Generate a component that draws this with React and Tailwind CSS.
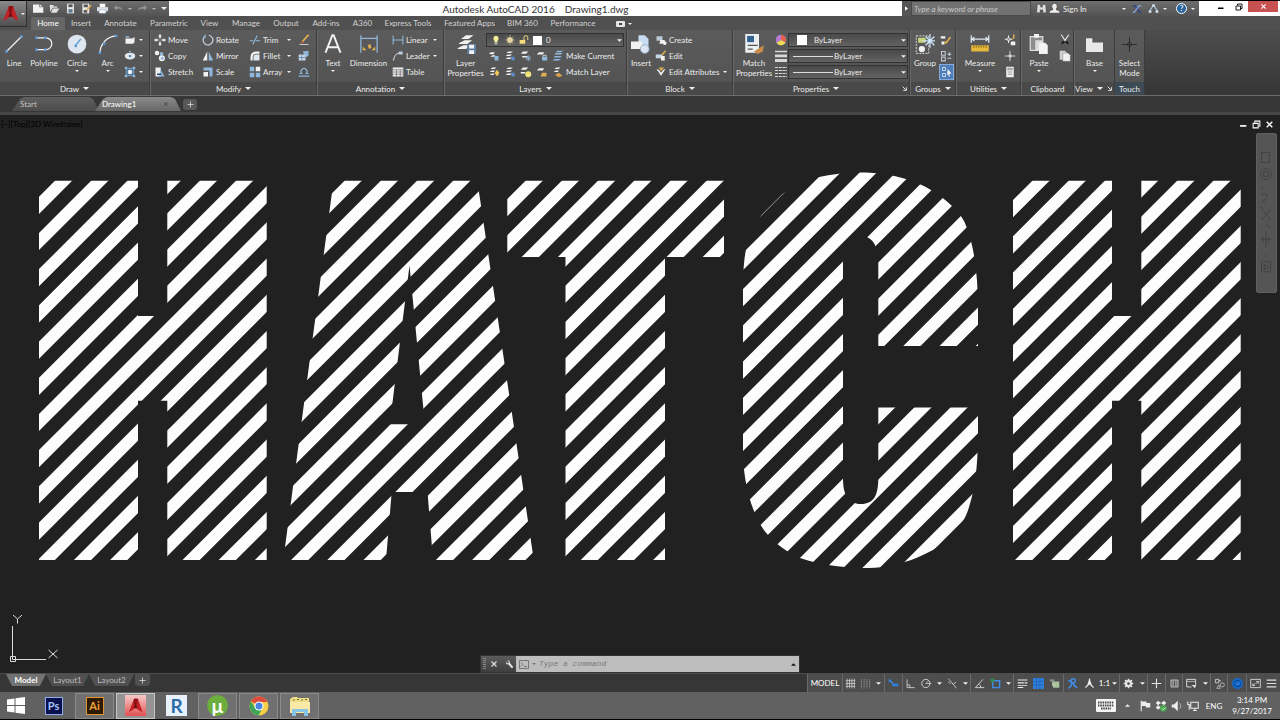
import clsx from "clsx";

const W = "#f2f2f2";
const BLUE = "#8fb8dc";
const GOLD = "#e0b050";

const icons = {
  line: <><path d="M2 14 14 2" stroke={W} /><path d="M1 13h2v2H1zM13 1h2v2h-2z" fill="#5d9bd8" /></>,
  polyline: <><path d="M2 3h7.500a4 4 0 0 1 0 9.500H2" stroke={W} /><path d="M1 2h2v2H1zM1 11.500h2v2H1zM8 2h2v2H8zM8 11.500h2v2H8z" fill="#5d9bd8" /></>,
  circle: <><circle cx="8" cy="8" r="7.500" fill="#dde5ee" /><path d="M7 9l4-5" stroke="#5d9bd8" /><path d="M6 8.500h2v2H6z" fill="#5d9bd8" /></>,
  arc: <><path d="M1.500 15C2 8 7 2 14.500 1.500" stroke={W} /><path d="M.5 14h2v2h-2zM4 6.500h2v2H4zM13.500.5h2v2h-2z" fill="#5d9bd8" /></>,
  rect: <><path d="M2 6h9l3-2v7l-2 2H2z" fill={W} /><path d="M2 3h5v2H2z" fill={BLUE} /></>,
  ellipse: <><ellipse cx="8" cy="8" rx="7" ry="4.500" fill="#dfe7ef" /><circle cx="8" cy="8" r="1.500" fill="#3f6f9f" /><path d="M7 1h2v2H7z" fill={BLUE} /></>,
  hatch: <><path d="M3 3h10v10H3z" stroke={BLUE} fill="#49729b" /><path d="M1 1h3v3H1zM12 1h3v3h-3zM1 12h3v3H1zM12 12h3v3h-3z" fill={BLUE} /><circle cx="8" cy="8" r="3" fill={W} /></>,
  move: <path d="M8 0l2.500 3H9v3H7V3H5.500zM8 16l2.500-3H9v-3H7v3H5.500zM0 8l3-2.500V7h3v2H3v1.500zM16 8l-3-2.500V7h-3v2h3v1.500z" fill={W} />,
  copy: <><circle cx="4" cy="4" r="3" fill={W} /><circle cx="10" cy="5" r="2.500" fill={BLUE} /><circle cx="10.500" cy="11" r="4" fill={W} /><circle cx="11" cy="11" r="2" fill={BLUE} /></>,
  stretch: <><path d="M2 2h7v12H2z" fill={W} /><path d="M9 5l5 9H6z" fill={BLUE} /><path d="M4 10h6v2H4z" fill="#30506e" /></>,
  rotate: <><path d="M4 3a6.500 6.500 0 1 0 5-1.300" stroke="#c9d6e4" strokeWidth="1.600" /><path d="M5 0v5H1z" fill={BLUE} /></>,
  mirror: <><path d="M7 2v12H1z" fill={W} /><path d="M9 2v12h6z" fill={BLUE} /></>,
  scale: <><path d="M2 2h12v12h-4V6H2z" fill={BLUE} /><path d="M2 8h6v6H2z" fill={W} /></>,
  trim: <path d="M1 9h5M9 9h6M11 2 5 14" stroke={BLUE} strokeWidth="1.400" />,
  fillet: <><path d="M2 14V9a7 7 0 0 1 7-7h5v3H9.500A4.500 4.500 0 0 0 5 9.500V14z" fill={W} /><path d="M6 14v-4a4 4 0 0 1 4-4h4v8z" fill="#dfe7ef" /></>,
  array: <><path d="M1 1h6v6H1zM9 9h6v6H9zM1 9h6v6H1z" fill={BLUE} /><path d="M9 1h6v6H9z" fill={W} /></>,
  erase: <><path d="M14 1 6 10" stroke={GOLD} strokeWidth="2.500" /><path d="M6 9l-3 4 5-2z" fill="#d96a3a" /><path d="M2 14h12" stroke={W} /></>,
  explode: <><path d="M6 2l8-1v6l-3 3z" fill={BLUE} /><path d="M1 6h9v8H1z" fill="#c8d9ea" /><path d="M5 6v8M1 10h9" stroke="#5a83aa" /></>,
  offset: <path d="M1 13.500h14M2 10h3a4 4 0 1 1 6 0h3" stroke={BLUE} strokeWidth="1.500" />,
  text: <path d="M2 15 7.500 1h1L14 15M4 10.500h8" stroke={W} strokeWidth="1.600" />,
  dimension: <><path d="M1.500 1v14M14.500 1v14M2 3.500h12" stroke={BLUE} /><path d="M3 10l3 3H3zM7 9l2-1 1 3-2 1zM13 10l-3 3h3z" fill={GOLD} /></>,
  linear: <path d="M1.500 2v12M14.500 2v12M2 8h12" stroke={BLUE} strokeWidth="1.400" />,
  leader: <><path d="M2 14C3 8 5 5 9 4.500h5" stroke={W} strokeWidth="1.300" /><path d="M9 2h5v4H9z" fill="#bcd0e4" /></>,
  table: <><path d="M1 2h14v12H1z" fill={W} /><path d="M1 5h14M1 8h14M1 11h14M6 5v9M11 5v9" stroke="#6c6c6c" /></>,
  layers: <><path d="M4 4l4-3h6l-4 3zM3 7l4-2h6l-4 3H2zM2 11l4-2h5l-3 3H1z" fill={W} /><path d="M9 8h7v8H9z" fill="#5c7ca0" /><path d="M10.500 8.500h4v3h-4zM10.500 13h4v3h-4z" fill={W} /></>,
  layerA: <><path d="M1 5l3-2h5l-2 3zM3 9l3-2h4L8 9z" fill={W} /><path d="M8 8h6v6H9z" fill={BLUE} /></>,
  layerB: <><path d="M3 4l3-2h6L9 4zM2 8l3-2h6L8 8zM2 12l3-2h6l-3 2z" fill={W} /><path d="M10 9h4v5h-4z" fill="#5d8fd0" /></>,
  layerSnow: <><path d="M1 5l3-3h7L8 5zM3 8h7v2H3z" fill={W} /><path d="M11 7v8M7.500 9l7 4M14.500 9l-7 4" stroke={BLUE} strokeWidth="1.300" /></>,
  layerLock: <><path d="M1 6l3-3h7L9 6z" fill={W} /><path d="M8 9h7v5H8z" fill={BLUE} /><path d="M9.500 9V7h4v2" stroke={W} /></>,
  layerCheck: <path d="M5 3l2-2h8l-3 2zM3 6l2-2h9l-2 2zM2 10l2-2h9l-2 2zM1 14l2-2h9l-3 2z" fill={BLUE} />,
  layerBulb: <><path d="M3 4l3-2h5L9 4zM2 8l3-2h4L8 8zM2 12l3-2h4l-2 2z" fill={W} /><path d="M12 5l3 4-2 4h-2L9 9z" fill="#f0c75a" /></>,
  layerSun: <><path d="M1 5l3-3h7L8 5zM1 8h6v2H1z" fill={W} /><circle cx="11" cy="11" r="4" fill="#f2e27a" /></>,
  layerUnlock: <><path d="M1 6l3-3h7L9 6z" fill={W} /><path d="M8 9h6v5H6z" fill={GOLD} /></>,
  layerMatch: <><path d="M3 4l3-2h5L9 4zM2 8l3-2h4L8 8z" fill={W} /><path d="M4 12l5-3 5 4-5 2z" fill="#d9a04a" /></>,
  bulb: <><path d="M8 1a4.500 4.500 0 0 1 2.500 8v3h-5V9A4.500 4.500 0 0 1 8 1z" fill="#f5ee9b" /><path d="M6 13h4v2H6z" fill="#cfd6dd" /></>,
  sun: <><circle cx="8" cy="8" r="4.500" fill="#f6e7b0" /><path d="M8 0v16M0 8h16M2.500 2.500l11 11M13.500 2.500l-11 11" stroke="#dcc993" /></>,
  unlock: <><path d="M1 8h9v6H1z" fill="#f5dc7d" /><path d="M8 8V4a3 3 0 0 1 6 0v4" stroke="#f5dc7d" strokeWidth="1.500" /></>,
  insert: <><path d="M6 1h5l3 3v6H6z" fill="#c8dcf2" /><path d="M0 6h9v6H0z" fill={W} /><circle cx="11" cy="12" r="3.500" fill="#dbe6f2" stroke="#8aa5c4" strokeWidth=".6" /></>,
  create: <><path d="M2 3h8v4L8 9H2z" fill="#b9c9d8" /><path d="M7 8h6v5H6z" fill={W} /><circle cx="13" cy="12" r="2.500" fill={W} /></>,
  edit: <><path d="M1 6h9v5H1z" fill="#c6d6e4" /><path d="M8 8h5v6H8z" fill={W} /><path d="M14 1 9 7" stroke={GOLD} strokeWidth="2" /></>,
  editAttr: <><path d="M2 4l6 9 6-9-3 1-3 4-3-4z" fill={W} /><path d="M5 2h7l-4 5z" fill={GOLD} /></>,
  match: <><path d="M1 0h11v15H1z" fill="#eceff2" /><path d="M2.500 1.500H8v5H2.500z" fill="#356391" /><path d="M3 9h8M3 12h4" stroke="#555" /><path d="M16 9l-5 3-3 2 3 2 4-2z" fill="#c98b4c" /></>,
  wheel: <><circle cx="8" cy="8" r="7" fill="#4f9ee0" /><path d="M8 8V1a7 7 0 0 1 6 10z" fill="#e85f4c" /><path d="M8 8l6 3.500a7 7 0 0 1-12 0z" fill="#f4d94f" /><path d="M8 8 2 11.500A7 7 0 0 1 8 1z" fill="#b878d0" /></>,
  lweight: <path d="M0 1h16v2H0zM0 6h16v3.500H0zM0 12h16v4H0z" fill="#d8d8d8" />,
  ltype: <path d="M0 2h16M0 6h16M0 10h16M0 14h16" stroke="#dedede" strokeWidth="1.300" strokeDasharray="4 1" />,
  group: <><path d="M1 1.500h10v14H1z" stroke={W} strokeWidth=".7" strokeDasharray="1.500 1" /><path d="M2.500 3h6v4h-6z" fill="#c8d57f" /><circle cx="5.500" cy="12" r="2.500" fill={W} /><path d="M12 0v11M6.500 5.500h10M8.500 2l7 7M15.500 2l-7 7" stroke="#cfe6ff" /></>,
  groupEdit: <><path d="M1 3h6v3H1zM2 10h4v4H2z" fill={W} /><path d="M14 4 8 12l-2-2" stroke={GOLD} strokeWidth="2" /></>,
  ungroup: <path d="M2 2h5v5H2zM2 9.500h5v5H2zM10 5.500h5M12.500 3v5M10 11h5" stroke="#bfc8d4" strokeWidth="1.400" />,
  groupSel: <><path d="M2 2h4v4H2zM2 10h4v4H2z" stroke={W} /><path d="M9 4l5 6-3 .5 1 3-1.500.5-1-3L8 12z" fill={W} /></>,
  measure: <><path d="M1 1v6M15 1v6M1 4h14M3.500 2.500 1.500 4l2 1.500M12.500 2.500l2 1.500-2 1.500" stroke="#dfe7ef" /><path d="M1 9h14v5H1z" fill="#e3b83c" /><path d="M3 9v2M5 9v2M7 9v2M9 9v2M11 9v2M13 9v2" stroke="#6b5418" strokeWidth=".6" /></>,
  quick: <><path d="M6 2v10M1 7h10" stroke={W} strokeWidth="1.300" /><circle cx="6" cy="7" r="2" fill="#8a8a8a" stroke={W} /><path d="M12 1h3l-2 3h2l-4 4 1-4z" fill={GOLD} /><path d="M9 10h6v5H9z" fill={W} /></>,
  point: <><path d="M8 1v14M1 8h14" stroke="#d5d5d5" strokeWidth="1.300" /><circle cx="8" cy="8" r="2.200" fill="#d5d5d5" /></>,
  calc: <><path d="M3 1h10v14H3z" fill={W} /><path d="M5 3h6v2H5zM5 8h6M5 11h6" stroke="#777" /></>,
  paste: <><path d="M1 2h10v11H1z" fill="#8d8d8d" stroke="#ddd" /><path d="M4 0h4v3H4z" fill={W} /><path d="M5 5h6v8H5z" fill="#dcdcdc" /><path d="M8 7h5l2 2v7H8z" fill={W} /></>,
  cut: <><path d="M3 1l6 9M13 1 7 10" stroke={W} strokeWidth="1.500" /><path d="M8 9l-4 1-1 4 4-2zM8 9l4 1 1 4-4-2z" fill="#1c1c1c" /></>,
  copyClip: <><path d="M1 1h7l2 2v10H1z" fill="#d2d2d2" /><path d="M5 4h7l3 3v8H5z" fill={W} stroke="#6d6d6d" strokeWidth=".6" /></>,
  base: <path d="M0 2h6v4h10v9H0z" fill="#e8e8e8" />,
  select: <><path d="M8 0v16M0 8h16" stroke="#2c2c2c" /><path d="M8 5l3 3-3 3-3-3z" stroke="#2c2c2c" /></>,
  newFile: <path d="M0 2h9v4h6v8H0zM10 2l4 3h-4z" fill={W} />,
  open: <path d="M1 3h5l1 2h5v2H5l-3 6zM5.500 8H15l-4 6H3z" fill="#e2e2e2" />,
  save: <><path d="M3 1h10v14H3z" fill="#e9e9e9" /><path d="M5 2h6v4H5z" fill="#555" /><path d="M5 9h6v5H5z" fill="#5b7590" /></>,
  saveAs: <><path d="M2 1h10v14H2z" fill="#e9e9e9" /><path d="M4 2h6v4H4zM4 10h5v4H4z" fill="#555" /><path d="M15 3 8 11" stroke={GOLD} strokeWidth="2" /></>,
  print: <><path d="M4 1h8v5H4z" fill="#fff" /><path d="M0 6h16v6H0z" fill="#dde4ec" /><path d="M3 10h10v5H3z" fill="#fff" stroke="#7d8ba0" strokeWidth=".7" /></>,
  undo: <path d="M6 3 1 7l5 4V8.500c4 0 7 0 8 3.500 0-5-3-6.500-8-6.500z" fill="#929292" />,
  redo: <path d="M10 3l5 4-5 4V8.500c-4 0-7 0-8 3.500 0-5 3-6.500 8-6.500z" fill="#929292" />,
  binoc: <path d="M2 2h4l1 4h2l1-4h4l1 12h-5v-4H6v4H1z" fill="#dcdcdc" stroke="#444" strokeWidth=".6" />,
  person: <path d="M8 1a4 4 0 0 1 2 7v2l5 2v2H1v-2l5-2V8a4 4 0 0 1 2-7z" fill="#efefef" />,
  exchange: <><path d="M1 3h4l7 10h3" stroke="#26408a" strokeWidth="2.200" /><path d="M15 3h-4L4 13H1" stroke="#88a6dd" strokeWidth="2" /></>,
  a360: <><path d="M2 12 8 3l6 9" stroke="#c6dcef" strokeWidth="1.500" /><path d="M1 11h4v3H1zM6 2h4v3H6zM11 11h4v3h-4z" fill="#d7e8f6" /></>,
  minimize: <path d="M2 9h11v3H2z" fill="currentColor" />,
  restore: <><path d="M2 6h9v8H2z" stroke="currentColor" strokeWidth="1.800" /><path d="M5 5V2h9v9h-2" stroke="currentColor" strokeWidth="1.800" /></>,
  close: <path d="M3 3l10 10M13 3 3 13" stroke="currentColor" strokeWidth="2.400" />,
  grid: <path d="M1 4h14M1 8h14M1 12h14M3 1v14M6.500 1v14M10 1v14M13.500 1v14" stroke="#e4e4e4" />,
  snap: <path d="M2 2v13M6 2v13M10 2v13M14 2v13" stroke="#c4c4c4" strokeDasharray="1.500 1" />,
  infer: <><path d="M2 2l5 6" stroke="#3f8ee8" strokeWidth="2" /><path d="M1 3h3v3H1zM6 8h9v4H6z" fill="#2e7fdc" /></>,
  ortho: <path d="M3 2v12h11M3 10h4v4" stroke="#cfcfcf" strokeWidth="1.300" />,
  polar: <><circle cx="7" cy="8" r="6" stroke="#dcdcdc" strokeWidth="1.300" /><path d="M15 8H7l4-4" stroke="#dcdcdc" /></>,
  iso: <path d="M2 1l12 14M2 6l3 2M9 9l4-3" stroke="#cfcfcf" strokeWidth="1.300" />,
  angle: <path d="M13 2 2 14h13M7 9a7 7 0 0 1 3 5" stroke="#dcdcdc" strokeWidth="1.300" />,
  osnap: <><path d="M4 4h10v10H4z" stroke="#3f8ee8" strokeWidth="2" /><path d="M1 1h5v5H1z" fill="#2f8f4a" /></>,
  weight: <path d="M1 2h14v1.500H1zM1 6h9v2H1zM11 6h4v2h-4zM1 10h14v1.200H1zM1 13h8v1.500H1z" fill="#ececec" />,
  transp: <><path d="M0 0h16v16H0z" fill="#2e7fdc" /><path d="M0 5h16M0 10h16M5 0v16M10 0v16" stroke="#1f5fae" /></>,
  cycle: <><path d="M1 2h7v3H1z" fill="#8f8f8f" /><path d="M4 5h11v9H6z" fill="#a6c29a" /><path d="M4 10h5" stroke="#efefef" /></>,
  annoVis: <><circle cx="9" cy="4" r="3" stroke="#3f8ee8" strokeWidth="2" /><path d="M2 15c4-2 5-5 5-8M9 7c1 4 3 6 6 7M2 3l4 3" stroke="#3f8ee8" strokeWidth="2.200" /></>,
  annoAuto: <path d="M8 1v7M8 8l-6 6M8 8l6 6M6 9l2-6 2 6z" stroke="#ececec" strokeWidth="1.800" />,
  gear: <><path d="M8 1v14M1 8h14M3 3l10 10M13 3 3 13" stroke="#e6e6e6" strokeWidth="2.400" /><circle cx="8" cy="8" r="5" fill="#e6e6e6" /><circle cx="8" cy="8" r="2" fill="#4c4c4c" /></>,
  plus: <path d="M8 1v14M1 8h14" stroke="#e8e8e8" strokeWidth="1.600" />,
  units: <path d="M3 3h10v10H3zM6 4v8M10 4v8" stroke="#d8d8d8" strokeWidth="1.300" />,
  quickProps: <><path d="M1 2h13v8M8 13H1V2" stroke="#dcdcdc" strokeWidth="1.400" /><path d="M1 5h13" stroke="#dcdcdc" /><path d="M8 10l5 5 2-5z" fill="#dcdcdc" /></>,
  isolate: <><path d="M2 2h5v5H2zM7 4h3" stroke="#d0d0d0" strokeWidth="1.300" /><circle cx="12" cy="10" r="3" stroke="#d0d0d0" /><path d="M4 15l3-5 2 5z" stroke="#d0d0d0" /></>,
  hardware: <><circle cx="8" cy="8" r="8" fill="#1668c8" /><circle cx="8" cy="8" r="4.500" stroke="#0b4a98" strokeWidth="1.500" /><path d="M6 8l2 2 4-5" stroke="#4b9bf0" /></>,
  clean: <path d="M1 2h14v12H1zM9 5h3v3M12 5 8.500 8.500M7 11H4V8M4 11l3.500-3" stroke="#e4e4e4" strokeWidth="1.200" />,
  menu: <path d="M1 3h14M1 8h14M1 13h14" stroke="#e0e0e0" strokeWidth="1.800" />,
  wrench: <path d="M2 3l3 3 2-2-3-3c3-1 5 1 4.500 4L14 11.500c1 1.500-1 3.500-2.500 2.500L6 8C3 8.500 1 6 2 3z" fill="#e0e0e0" />,
  flag: <><path d="M3 1v14" stroke="#eee" strokeWidth="1.500" /><path d="M3 2h7v2h5v6H9V8H3z" fill="#eee" /></>,
  dropbox: <><path d="M4 1l4 3-4 3-3-3zM12 1l3 3-3 3-4-3zM4 7l4 3-4 3-3-3zM12 7l3 3-3 3-4-3z" fill="#eee" /><circle cx="11" cy="11" r="4.500" fill="#4aa64f" /><path d="M9 11l2 2 3-3" stroke="#fff" /></>,
  volume: <><path d="M1 6h3l5-5v14L4 10H1z" fill="#eee" /><path d="M11.500 4.500a5 5 0 0 1 0 7" stroke="#ccc" /></>,
  network: <path d="M5 3h10v8H5zM8 14h5M10.500 11v3M1 2v4h2v7" stroke="#eee" strokeWidth="1.400" />,
};

const autocadA = <><path d="M1 15 6.500 1h4L15.500 15l-4-2L8 10l-2.500 2.500z" fill="#c22126" /><path d="M6.500 1h4L8.500 9.500 6 5z" fill="#8c1216" /><path d="M8 6l2 5H6z" fill="#6e0d11" /></>;

function Icon({ name, className = "size-3" }) {
  return <svg viewBox="0 0 16 16" fill="none" aria-hidden="true" className={clsx("shrink-0", className)}>{icons[name]}</svg>;
}

function Caret({ className = "w-[6px] h-[3px]" }) {
  return <svg viewBox="0 0 8 4" aria-hidden="true" className={clsx("shrink-0", className)}><path d="M0 0h8L4 4z" fill="#f0f0f0" /></svg>;
}

function BigButton({ icon, label, sub, caret, className, iconClass = "size-[20px]" }) {
  return (
    <button className={clsx("flex flex-col items-center shrink-0 h-12 pt-[2px] leading-[10px]", className)}>
      <span className="flex items-center justify-center h-[20px]"><Icon name={icon} className={iconClass} /></span>
      <span className="mt-[4px] whitespace-nowrap">{label}</span>
      {sub && <span className="whitespace-nowrap">{sub}</span>}
      {caret && <Caret className="w-[4px] h-[2px] mt-[2px]" />}
    </button>
  );
}

function SmallButton({ icon, label, caret, active }) {
  return (
    <button aria-label={label || icon} className={clsx("flex items-center gap-[2px] h-4 w-full", active && "bg-[#4f7dba] border border-[#86abd8] justify-center")}>
      <span className="flex justify-center w-[13px] shrink-0"><Icon name={icon} /></span>
      {label && <span className="whitespace-nowrap leading-[10px]">{label}</span>}
      {caret && <Caret className="w-[4px] h-[2px] ml-auto mr-[4px]" />}
    </button>
  );
}

function Column({ items, className }) {
  return <div className={clsx("flex flex-col shrink-0", className)}>{items.map((it) => <SmallButton key={it.icon} {...it} />)}</div>;
}

function Panel({ title, arrow = true, launcher, className, footClass = "bg-[#494949]", children }) {
  return (
    <section aria-label={title} className={clsx("flex flex-col shrink-0 border-r border-[#3c3c3c] bg-linear-to-b from-[#5b5b5b] to-[#525252]", className)}>
      <div className="flex h-[52px] pt-[2px]">{children}</div>
      <div className={clsx("flex items-center justify-center h-[13px] gap-[4px] leading-[10px]", footClass)}>
        <span className={clsx(launcher && "ml-auto")}>{title}</span>
        {arrow && <Caret className="w-[6px] h-[3px]" />}
        {launcher && <svg viewBox="0 0 8 8" className="size-[5px] ml-auto mr-[2px]" aria-hidden="true"><path d="M1 1l5 5M7 2v5H2" stroke="#eee" strokeWidth="1.500" fill="none" /></svg>}
      </div>
    </section>
  );
}

function Combo({ label, value, prefix, selectClass, className }) {
  return (
    <div className={clsx("flex items-center h-[14px] pl-1 pr-px gap-1 border border-[#333] bg-linear-to-b from-[#4a4a4a] to-[#626262]", className)}>
      {prefix}
      <select aria-label={label} className={clsx("appearance-none bg-transparent flex-1 min-w-0 h-3 leading-[12px] outline-none", selectClass)}>
        <option>{value}</option>
      </select>
      <Caret className="w-[5px] h-[3px]" />
    </div>
  );
}

const tabs = [
  { label: "Home", w: "w-[34px]" },
  { label: "Insert", w: "w-[32px]" },
  { label: "Annotate", w: "w-[47px]" },
  { label: "Parametric", w: "w-[50px]" },
  { label: "View", w: "w-[31px]" },
  { label: "Manage", w: "w-[42px]" },
  { label: "Output", w: "w-[38px]" },
  { label: "Add-ins", w: "w-[42px]" },
  { label: "A360", w: "w-[31px]" },
  { label: "Express Tools", w: "w-[60px]" },
  { label: "Featured Apps", w: "w-[63px]" },
  { label: "BIM 360", w: "w-[43px]" },
  { label: "Performance", w: "w-[58px]" },
];

function Header() {
  return (
    <header className="flex bg-[#505050] border-t border-black">
      <button aria-label="Application menu" className="flex items-center justify-center gap-[2px] w-[27px] h-[26px] shrink-0 bg-linear-to-b from-[#8a8a8a] to-[#505050] border-r border-b border-[#2e2e2e]">
        <svg viewBox="0 0 16 16" className="size-[17px]" aria-hidden="true">{autocadA}</svg>
        <Caret className="w-[4px] h-[2px]" />
      </button>
      <div className="flex-1 min-w-0">
        <div className="flex h-[15px] bg-linear-to-b from-[#6e6e6e] to-[#535353]">
          <div className="flex items-center w-[142px] pl-[3px] shrink-0">
            {["newFile", "open", "save", "saveAs", "print", "undo"].map((n) => (
              <button key={n} aria-label={n} className="flex justify-center w-4"><Icon name={n} className="size-[11px]" /></button>
            ))}
            <Caret className="w-[4px] h-[2px] mx-[2px] opacity-60" />
            <button aria-label="redo" className="flex justify-center w-4"><Icon name="redo" className="size-[11px]" /></button>
            <Caret className="w-[4px] h-[2px] mx-[2px] opacity-60" />
            <Caret className="w-[6px] h-[3px] ml-[3px]" />
          </div>
          <h1 className="flex-1 flex items-center justify-center gap-[10px] bg-white text-[#333] text-[10px] leading-[14px] whitespace-nowrap">
            <span>Autodesk AutoCAD 2016</span><span>Drawing1.dwg</span>
          </h1>
          <button aria-label="Expand search" className="flex items-center justify-center w-[9px] bg-[#555]">
            <svg viewBox="0 0 4 6" className="w-[3px] h-[5px]" aria-hidden="true"><path d="M0 0v6l4-3z" fill="#fff" /></svg>
          </button>
          <input aria-label="Search" placeholder="Type a keyword or phrase" className="w-[120px] px-[2px] bg-[#717171] border border-[#4a4a4a] italic text-white placeholder:text-[#c8c8c8] outline-none" />
          <div className="flex items-center w-[168px] pl-[2px] shrink-0">
            <button aria-label="Find" className="flex justify-center w-4"><Icon name="binoc" className="size-[11px]" /></button>
            <button className="flex items-center gap-[3px] w-[70px]"><Icon name="person" className="size-[11px]" />Sign In</button>
            <Caret className="w-[4px] h-[2px] ml-[3px]" />
            <button aria-label="Exchange apps" className="ml-[6px]"><Icon name="exchange" className="size-[10px]" /></button>
            <button aria-label="Stay connected" className="flex items-center gap-[4px] ml-[6px]"><Icon name="a360" className="size-[11px]" /><Caret className="w-[4px] h-[2px]" /></button>
            <button aria-label="Help" className="flex items-center gap-[4px] ml-auto mr-[4px]">
              <span className="flex items-center justify-center size-[11px] rounded-full bg-[#28629b] border border-white font-bold leading-[9px]">?</span>
              <Caret className="w-[4px] h-[2px]" />
            </button>
          </div>
          <div className="flex w-[81px] bg-white text-black shrink-0">
            <button aria-label="Minimize" className="flex items-center justify-center ml-[13px] w-[18px] h-[11px]"><Icon name="minimize" className="size-[8px]" /></button>
            <button aria-label="Restore" className="flex items-center justify-center w-[18px] h-[11px]"><Icon name="restore" className="size-[8px]" /></button>
            <button aria-label="Close" className="flex items-center justify-center w-[30px] h-[11px] bg-[#c75050] text-white"><Icon name="close" className="size-[7px]" /></button>
          </div>
        </div>
        <nav className="flex pl-[4px] h-[14px] items-end">
          {tabs.map(({ label, w }, i) => (
            <button key={label} className={clsx("h-[13px] leading-[11px] shrink-0 text-center whitespace-nowrap", w, i === 0 ? "bg-[#666] text-white rounded-t-[2px]" : "text-[#d2d2d2]")}>{label}</button>
          ))}
          <button aria-label="Minimize ribbon" className="flex items-center gap-[3px] h-[13px] ml-[14px]">
            <span className="flex items-center justify-center w-[9px] h-[6px] rounded-[1px] bg-[#e4e4e4]"><span className="w-[3px] h-[2px] bg-[#444]" /></span>
            <Caret className="w-[4px] h-[2px]" />
          </button>
        </nav>
      </div>
    </header>
  );
}

function Ribbon() {
  return (
    <div className="flex h-[66px] border-b border-[#6c6c6c] bg-linear-to-b from-[#4d4d4d] to-[#363636] overflow-hidden">
      <Panel title="Draw" className="w-[150px]">
        <BigButton icon="line" label="Line" className="w-[28px]" />
        <BigButton icon="polyline" label="Polyline" className="w-[32px]" />
        <BigButton icon="circle" label="Circle" caret className="w-[34px]" />
        <BigButton icon="arc" label="Arc" caret className="w-[27px]" />
        <Column className="w-[26px] pl-[2px]" items={[{ icon: "rect", caret: true }, { icon: "ellipse", caret: true }, { icon: "hatch", caret: true }]} />
      </Panel>
      <Panel title="Modify" className="w-[167px] border-l border-l-[#686868]">
        <Column className="ml-[2px] w-[48px]" items={[{ icon: "move", label: "Move" }, { icon: "copy", label: "Copy" }, { icon: "stretch", label: "Stretch" }]} />
        <Column className="w-[47px]" items={[{ icon: "rotate", label: "Rotate" }, { icon: "mirror", label: "Mirror" }, { icon: "scale", label: "Scale" }]} />
        <Column className="w-[47px]" items={[{ icon: "trim", label: "Trim", caret: true }, { icon: "fillet", label: "Fillet", caret: true }, { icon: "array", label: "Array", caret: true }]} />
        <Column className="w-[14px] ml-[2px]" items={[{ icon: "erase" }, { icon: "explode" }, { icon: "offset" }]} />
      </Panel>
      <Panel title="Annotation" className="w-[127px] border-l border-l-[#686868]">
        <BigButton icon="text" label="Text" caret className="w-[30px]" />
        <BigButton icon="dimension" label="Dimension" className="w-[41px]" />
        <Column className="w-[50px] ml-[2px]" items={[{ icon: "linear", label: "Linear", caret: true }, { icon: "leader", label: "Leader", caret: true }, { icon: "table", label: "Table" }]} />
      </Panel>
      <Panel title="Layers" className="w-[183px] border-l border-l-[#686868]">
        <BigButton icon="layers" label="Layer" sub="Properties" className="w-[41px]" />
        <div className="w-[138px]">
          <Combo
            label="Layer" value="0"
            prefix={<><Icon name="bulb" className="size-[10px]" /><Icon name="sun" className="size-[10px]" /><Icon name="unlock" className="size-[10px]" /><span className="size-[9px] bg-white" /></>}
            className="w-full mt-[1px] mb-[1px]"
          />
          <div className="flex items-center h-4">
            {["layerA", "layerB", "layerSnow", "layerLock", "layerCheck"].map((n) => (
              <button key={n} aria-label={n} className="flex justify-center w-4"><Icon name={n} className="size-3" /></button>
            ))}
            <span className="leading-[10px] whitespace-nowrap">Make Current</span>
          </div>
          <div className="flex items-center h-4">
            {["layerBulb", "layerB", "layerSun", "layerUnlock", "layerMatch"].map((n) => (
              <button key={n} aria-label={n} className="flex justify-center w-4"><Icon name={n} className="size-3" /></button>
            ))}
            <span className="leading-[10px] whitespace-nowrap">Match Layer</span>
          </div>
        </div>
      </Panel>
      <Panel title="Block" className="w-[106px] border-l border-l-[#686868]">
        <BigButton icon="insert" label="Insert" className="w-[26px]" />
        <Column className="w-[77px]" items={[{ icon: "create", label: "Create" }, { icon: "edit", label: "Edit" }, { icon: "editAttr", label: "Edit Attributes", caret: true }]} />
      </Panel>
      <Panel title="Properties" launcher className="w-[177px] border-l border-l-[#686868]">
        <BigButton icon="match" label="Match" sub="Properties" className="w-[40px]" />
        <Column className="w-[14px]" items={[{ icon: "wheel" }, { icon: "lweight" }, { icon: "ltype" }]} />
        <div className="flex flex-col gap-[2px] w-[120px] mt-[1px]">
          <Combo label="Object color" value="ByLayer" prefix={<span className="size-[10px] bg-white ml-[4px] mr-[3px]" />} />
          <Combo label="Lineweight" value="ByLayer" prefix={<span className="w-[40px] h-px bg-[#ddd]" />} selectClass="-ml-[3px]" />
          <Combo label="Linetype" value="ByLayer" prefix={<span className="w-[40px] h-px bg-[#ddd]" />} selectClass="-ml-[3px]" />
        </div>
      </Panel>
      <Panel title="Groups" className="w-[46px] border-l border-l-[#686868]">
        <BigButton icon="group" label="Group" className="w-[28px]" />
        <Column className="w-[15px]" items={[{ icon: "groupEdit" }, { icon: "ungroup" }, { icon: "groupSel", active: true }]} />
      </Panel>
      <Panel title="Utilities" className="w-[65px] border-l border-l-[#686868]">
        <BigButton icon="measure" label="Measure" caret className="w-[46px]" />
        <Column className="w-[14px]" items={[{ icon: "quick" }, { icon: "point" }, { icon: "calc" }]} />
      </Panel>
      <Panel title="Clipboard" arrow={false} className="w-[53px] border-l border-l-[#686868]">
        <BigButton icon="paste" label="Paste" caret className="w-[34px]" />
        <Column className="w-[14px] ml-[2px]" items={[{ icon: "cut" }, { icon: "copyClip" }]} />
      </Panel>
      <Panel title="View" launcher className="w-[41px] border-l border-l-[#686868]">
        <BigButton icon="base" label="Base" caret className="w-[39px]" iconClass="size-[17px]" />
      </Panel>
      <Panel title="Touch" arrow={false} className="w-[30px]" footClass="bg-[#3c4a55]">
        <BigButton icon="select" label="Select" sub="Mode" className="w-[29px]" iconClass="size-[15px]" />
      </Panel>
    </div>
  );
}

function FileTabs() {
  const shape = "[clip-path:polygon(0_100%,8px_15%,12px_0,calc(100%-10px)_0,calc(100%-6px)_15%,100%_100%)]";
  return (
    <div className="flex items-end h-[19px] pl-[12px] pb-px bg-[#373737] border-b-[3px] border-[#474747]">
      <button className={clsx("w-[87px] h-[14px] pl-[8px] text-left text-[#c2c2c2] bg-linear-to-b from-[#5f5f5f] to-[#4c4c4c] leading-[14px]", shape)}>Start</button>
      <button className={clsx("flex items-center justify-between w-[86px] h-[14px] pl-[7px] pr-[12px] -ml-[4px] text-white bg-linear-to-b from-[#8a8a8a] to-[#686868] leading-[14px]", shape)}>
        Drawing1<Icon name="close" className="size-[6px] text-[#4b4b4b]" />
      </button>
      <button aria-label="New tab" className="flex items-center justify-center w-[14px] h-[11px] mb-px ml-[2px] rounded-[3px] bg-[#585858]"><Icon name="plus" className="size-[7px]" /></button>
    </div>
  );
}

const letterH = "M39 180.700H138V316H167.300V180.700H266.700V560H167.300V400.700H138V560H39Z";
const letterA = "M333.500 180.700H477.300L533.800 560H433L427.500 492H391.700L386 560H283.300ZM409.500 265.500 389.800 424.300H424.900Z";
const letterT = "M507.300 180.700H724V257H665V560H565.500V257H507.300Z";
const letterC =
  "M743 290C743 272 744 258 746.500 247C748 238 754 225 762 214.400L782.500 194C792 187 803 181 818 177.300C832 174 847 172.300 866 172.500C895 174 917 181 931 190C946 199 959 211 964 221C974 242 978 275 978 308V346H878.300V262C878.300 247 873 236 861 236C849 236 843 246 843 262V478C843 495 848 504 861 504C874 504 878.300 495 878.300 478V407.500H978V433C978 458 976 480 972.500 494C970 505 967 515 963 521C957 530 944 543 933 550C923 555 913 560 903 562.500C893 566 882 568 861 568C838 567 822 565 800 558C780 549 767 536 760 524C748 502 743 475 743 450Z";

const stripePath = Array.from({ length: 52 }, (_, i) => {
  // x + y is constant along each stripe
  const s = 235.700 + 36.200 * (i - 3);
  return `M${s - 100} 100h17.200L${s - 582.800} 600h-17.200Z`;
}).join("");

function Canvas() {
  return (
    <main className="relative flex-1 min-h-0 bg-[#212121] overflow-hidden">
      <svg viewBox="0 115 1280 558" className="block w-full h-full" role="img" aria-label="HATCH">
        <defs>
          <clipPath id="letters">
            <path d={letterH} />
            <path d={letterA} clipRule="evenodd" />
            <path d={letterT} />
            <path d={letterC} />
            <path d={letterH} transform="translate(974 0)" />
          </clipPath>
        </defs>
        <path d={stripePath} fill="#fdfdfd" clipPath="url(#letters)" />
      </svg>
      <span className="absolute left-[1px] top-[4px] leading-[10px] text-black">[−][Top][2D Wireframe]</span>
      <div className="absolute right-[6px] top-[5px] flex gap-[4px] text-white">
        {["minimize", "restore", "close"].map((n) => <button key={n} aria-label={`${n} drawing`}><Icon name={n} className="size-[9px]" /></button>)}
      </div>
      <div className="absolute right-[3px] top-[18px] w-[21px] h-[160px] rounded-[2px] bg-[#555] border border-[#606060]">
        <svg viewBox="0 0 21 160" className="w-full h-full" fill="none" stroke="#3f3f3f" aria-hidden="true">
          <path d="M5 13h9v11H5zM5 52h2M14 52h1M5 60c5-4 9 2 4 5s-4 3 1 4M4 73l11 15M5 88l10-12M10 92l5 4M10 100v18M4 109h12M7 106v6M13 106v6M10 126v2M5 134h10v11H5z" />
          <circle cx="10" cy="37" r="6" /><circle cx="10" cy="37" r="3" /><path d="M8 137l5 3-5 3z" />
        </svg>
      </div>
      <svg viewBox="0 0 62 50" className="absolute left-0 bottom-[8px] w-[62px] h-[50px]" fill="none" stroke="#dcdcdc" aria-hidden="true">
        <path d="M12.500 11v33.500M12.500 44.500H46M10.500 41.500h5v5h-5zM13 0l4.500 4L22 0M17.500 4v4.500M48.500 35l9 8M57.500 35l-9 8" />
      </svg>
      <div className="absolute bottom-0 left-1/2 -translate-x-1/2 flex w-[320px] h-[18px] border border-[#333] bg-linear-to-b from-[#5c5c5c] to-[#3e3e3e]">
        <div className="flex items-center gap-[7px] w-[35px] pl-[2px] shrink-0">
          <span className="w-[3px] h-3 bg-[repeating-linear-gradient(#888_0_1px,transparent_1px_2px)]" />
          <Icon name="close" className="size-[8px] text-[#ddd] -ml-[3px]" />
          <Icon name="wrench" className="size-[9px]" />
        </div>
        <div className="flex flex-1 items-center gap-[3px] px-[3px] bg-[#bdbdbd]">
          <svg viewBox="0 0 10 9" className="w-[10px] h-[9px]" fill="none" stroke="#777" aria-hidden="true"><path d="M.5.5h9v8h-9zM2 2.500l2 2-2 2M5 6.500h3" /></svg>
          <svg viewBox="0 0 8 4" className="w-[4px] h-[2px]" aria-hidden="true"><path d="M0 0h8L4 4z" fill="#777" /></svg>
          <input aria-label="Command" placeholder="Type a command" className="flex-1 min-w-0 bg-transparent italic font-['Liberation_Mono',monospace] text-[8px] placeholder:text-[#7c7c7c] outline-none" />
          <svg viewBox="0 0 8 4" className="w-[5px] h-[3px]" aria-hidden="true"><path d="M0 4h8L4 0z" fill="#111" /></svg>
        </div>
      </div>
    </main>
  );
}

const statusItems = [
  { text: "MODEL", w: "w-[35px]", sep: true },
  { icon: "grid", w: "w-[16px]", sep: true },
  { icon: "snap", w: "w-[15px]" },
  { caret: true, w: "w-[11px]" },
  { icon: "infer", w: "w-[18px]", sep: true },
  { icon: "ortho", w: "w-[16px]", sep: true },
  { icon: "polar", w: "w-[16px]" },
  { caret: true, w: "w-[10px]" },
  { icon: "iso", w: "w-[16px]" },
  { caret: true, w: "w-[10px]" },
  { icon: "angle", w: "w-[17px]", sep: true },
  { icon: "osnap", w: "w-[16px]" },
  { caret: true, w: "w-[10px]" },
  { icon: "weight", w: "w-[17px]", sep: true },
  { icon: "transp", w: "w-[16px]" },
  { icon: "cycle", w: "w-[17px]" },
  { icon: "annoVis", w: "w-[18px]", sep: true },
  { icon: "annoAuto", w: "w-[16px]" },
  { text: "1:1", caret: true, w: "w-[22px]" },
  { icon: "gear", w: "w-[18px]", sep: true },
  { caret: true, w: "w-[10px]" },
  { icon: "plus", w: "w-[18px]", sep: true },
  { icon: "units", w: "w-[17px]", sep: true },
  { icon: "quickProps", w: "w-[18px]", sep: true },
  { caret: true, w: "w-[10px]" },
  { icon: "isolate", w: "w-[17px]", sep: true },
  { icon: "hardware", w: "w-[19px]", sep: true },
  { icon: "clean", w: "w-[17px]", sep: true },
  { icon: "menu", w: "w-[17px]" },
];

function StatusBar() {
  const shape = "[clip-path:polygon(0_0,100%_0,calc(100%-6px)_100%,6px_100%)]";
  return (
    <div className="flex justify-between h-[19px] bg-[#363636] border-t border-[#4e4e4e]">
      <div className="flex h-[12px] pl-[6px] leading-[10px]">
        <button className={clsx("w-[40px] bg-[#727272] text-white font-bold", shape)}>Model</button>
        <button className={clsx("w-[43px] bg-[#505050] text-[#bdbdbd]", shape)}>Layout1</button>
        <button className={clsx("w-[45px] bg-[#505050] text-[#bdbdbd]", shape)}>Layout2</button>
        <button aria-label="New layout" className="flex items-center justify-center w-[15px] rounded-b-[3px] bg-[#505050] ml-[1px]"><Icon name="plus" className="size-[7px]" /></button>
      </div>
      <div className="flex bg-[#4d4d4d]">
        {statusItems.map(({ text, icon, caret, w, sep }, i) => (
          <button key={i} aria-label={text || icon || "More"} className={clsx("flex items-center justify-center gap-[2px] shrink-0", w, sep && "border-l border-[#6a6a6a]", text && "text-white")}>
            {text}
            {icon && <Icon name={icon} className="size-[11px]" />}
            {caret && <Caret className="w-[5px] h-[3px]" />}
          </button>
        ))}
      </div>
    </div>
  );
}

function Taskbar() {
  const apps = [
    { name: "Photoshop", el: <span className="flex items-center justify-center size-[18px] bg-[#08104d] border border-[#8fa9ea] text-[#a9c3f5] text-[11px] leading-[16px] font-bold">Ps</span> },
    { name: "Illustrator", open: true, el: <span className="flex items-center justify-center size-[18px] bg-[#2e1903] border border-[#e0962e] text-[#eda33a] text-[11px] leading-[16px] font-bold">Ai</span> },
    { name: "AutoCAD", active: true, el: <svg viewBox="-3 -3 22 22" className="size-[21px] bg-linear-to-b from-[#f3c8c8] to-[#e05055]">{autocadA}</svg> },
    { name: "Revit", el: <span className="flex items-center justify-center size-[21px] bg-[#e8f1fa] text-[#2d6cab] text-[19px] leading-[20px] font-bold">R</span> },
    { name: "uTorrent", open: true, el: <span className="flex items-center justify-center size-[21px] rounded-full bg-[#6cae3e] text-white text-[19px] leading-[18px] font-bold">µ</span> },
    { name: "Chrome", open: true, el: (
      <svg viewBox="0 0 20 20" className="size-[20px]">
        <circle cx="10" cy="10" r="9.500" fill="#f6cf46" />
        <path d="M10 10 1.800 5.200A9.500 9.500 0 0 1 18.500 6H10z" fill="#dd4b3e" />
        <path d="M1.800 5.200A9.500 9.500 0 0 0 9.500 19.500L13.500 12 10 10 6.500 12z" fill="#3da557" />
        <circle cx="10" cy="10" r="4.600" fill="#fff" /><circle cx="10" cy="10" r="3.500" fill="#4a86e0" />
      </svg>
    ) },
    { name: "File Explorer", open: true, el: (
      <svg viewBox="0 0 22 20" className="w-[22px] h-[20px]">
        <path d="M1 3l3-2h4l1 1h11v14H1z" fill="#f3dc84" /><path d="M1 6h20v11H1z" fill="#f8e9a6" />
        <path d="M4 4h2M8 3.500h2M12 4h2M16 3.500h2" stroke="#5b7f4a" /><path d="M3 20v-7h16v7h-4v-4H7v4z" fill="#86c5e6" />
      </svg>
    ) },
  ];
  return (
    <footer className="flex items-center justify-between h-[28px] bg-[#616161] border-b border-black">
      <div className="flex items-center">
        <button aria-label="Start menu" className="flex justify-center w-[32px] mr-[2px]">
          <svg viewBox="0 0 18 17" className="w-[18px] h-[17px]" fill="#fff" aria-hidden="true"><path d="M0 2.500 7.500 1.400V8H0zM8.500 1.200 18 0v8H8.500zM0 9h7.500v6.600L0 14.500zM8.500 9H18v8l-9.500-1.300z" /></svg>
        </button>
        <div className="flex gap-[2px]">
          {apps.map(({ name, open, active, el }) => (
            <button key={name} aria-label={name} className={clsx("flex items-center justify-center w-[39px] h-[26px] border", active ? "bg-[#949494] border-[#c6c6c6]" : open ? "bg-[#707070] border-[#8b8b8b]" : "border-transparent")}>{el}</button>
          ))}
        </div>
      </div>
      <div className="flex items-center text-white">
        <svg viewBox="0 0 20 13" className="w-[20px] h-[13px] mr-[9px]" aria-hidden="true">
          <rect width="20" height="13" rx="1" fill="#f4f4f4" /><path d="M2 3.500h16M2 6.500h16M5 9.500h10" stroke="#444" strokeWidth="1.800" strokeDasharray="1.500 .8" />
        </svg>
        <svg viewBox="0 0 8 4" className="w-[5px] h-[3px] mr-[7px]" aria-hidden="true"><path d="M0 4h8L4 0z" fill="#eee" /></svg>
        {["flag", "dropbox", "volume", "network"].map((n) => <span key={n} className="flex justify-center w-4"><Icon name={n} className="size-3" /></span>)}
        <span className="w-[26px] text-center">ENG</span>
        <time className="w-[50px] mr-[3px] text-center leading-[11px]">3:14 PM<br />9/27/2017</time>
      </div>
    </footer>
  );
}

export default function App() {
  return (
    <div className="flex flex-col h-screen bg-[#212121] text-[8px] text-[#ececec] font-['Lato','Open_Sans',sans-serif] overflow-hidden">
      <Header />
      <Ribbon />
      <FileTabs />
      <Canvas />
      <StatusBar />
      <Taskbar />
    </div>
  );
}
